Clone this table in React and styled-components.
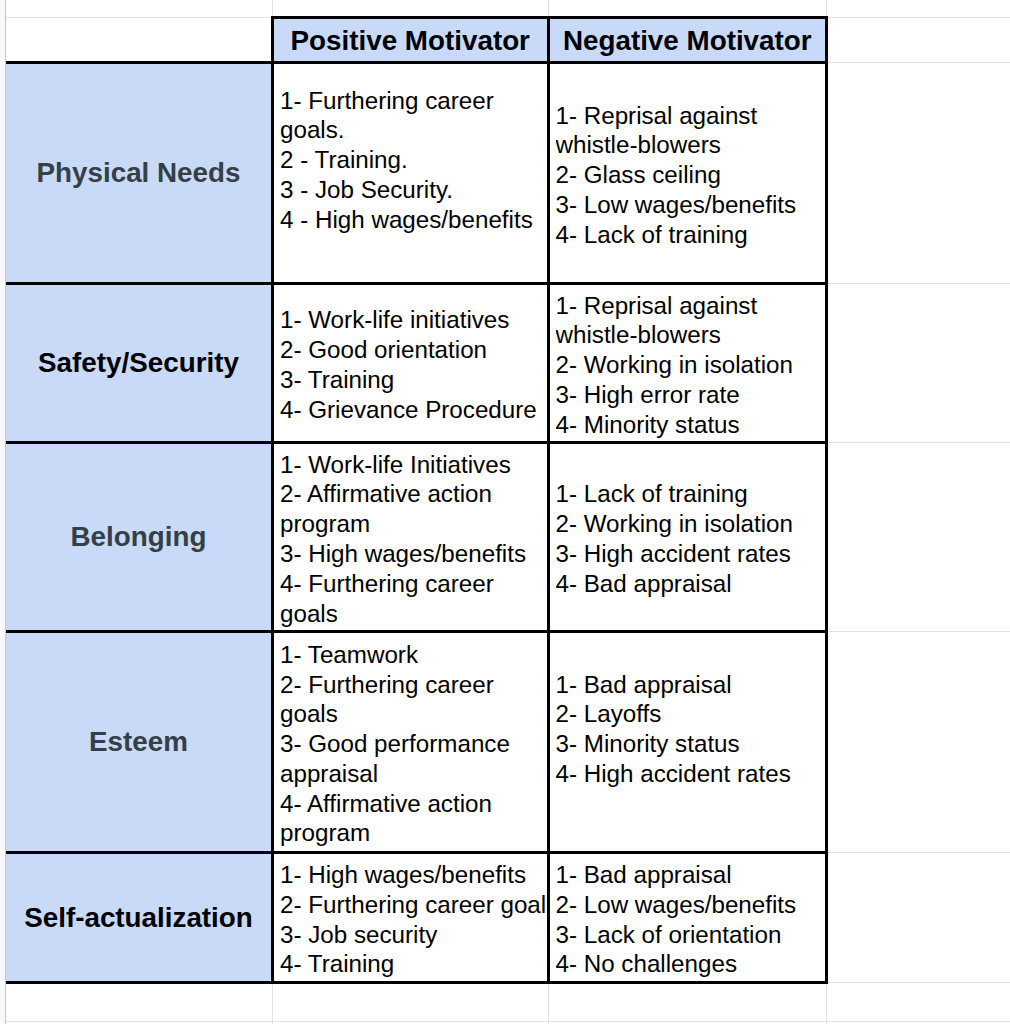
import React from 'react';
import styled, { createGlobalStyle } from 'styled-components';

const Global = createGlobalStyle`
  html, body { margin: 0; padding: 0; background: #ffffff; }
  body { font-family: "Liberation Sans", Arial, Helvetica, sans-serif; }
`;

const Page = styled.div`
  display: flex;
  width: 1010px;
  height: 1024px;
  overflow: hidden;
  background: #ffffff;
`;

const Gutter = styled.div`
  flex: none;
  width: 5px;
  background: #f8f9fa;
  border-right: 1px solid #c4c7c5;
`;

const Sheet = styled.table`
  flex: none;
  width: 1004px;
  border-collapse: collapse;
  table-layout: fixed;
  color: #000;
`;

const Row = styled.tr`
  height: ${(p) => p.$h}px;
`;

const Cell = styled.td`
  padding: 0;
  border: 1px solid #e2e2e2;
  &:first-child { border-left: none; }
  ${(p) => (p.$top ? 'border-top: none;' : '')}
`;

const HeadCell = styled.td`
  padding: 2px 0 0 0;
  border: 3px solid #000;
  background: #c9daf8;
  font-weight: 700;
  font-size: 27.8px;
  text-align: center;
  vertical-align: middle;
  white-space: nowrap;
`;

const Corner = styled.td`
  padding: 0;
  border: 1px solid #e2e2e2;
  border-left: none;
  border-bottom: 3px solid #000;
`;

const Label = styled.td`
  padding: 0;
  border: 3px solid #000;
  border-left: none;
  background: #c9daf8;
  font-weight: 700;
  font-size: 27.8px;
  text-align: center;
  vertical-align: middle;
  color: ${(p) => (p.$muted ? '#354046' : '#000')};
  white-space: nowrap;
`;

const Body = styled.td`
  padding: 4px 0 0 6px;
  border: 3px solid #000;
  background: #fff;
  vertical-align: middle;
  font-size: 24.2px;
  overflow: hidden;
`;

const Line = styled.div`
  line-height: 29.8px;
  height: 29.8px;
  white-space: nowrap;
  overflow: hidden;
`;

const Blank = styled.td`
  padding: 0;
  border: 1px solid #e2e2e2;
`;

const rows = [
  {
    label: 'Physical Needs',
    muted: true,
    h: 221,
    pos: ['1- Furthering career', 'goals.', '2 - Training.', '3 - Job Security.', '4 - High wages/benefits', ''],
    neg: ['1- Reprisal against', 'whistle-blowers', '2- Glass ceiling', '3- Low wages/benefits', '4- Lack of training'],
  },
  {
    label: 'Safety/Security',
    muted: false,
    h: 159,
    pos: ['1- Work-life initiatives', '2- Good orientation', '3- Training', '4- Grievance Procedure'],
    neg: ['1- Reprisal against', 'whistle-blowers', '2- Working in isolation', '3- High error rate', '4- Minority status'],
  },
  {
    label: 'Belonging',
    muted: true,
    h: 189,
    pos: ['1- Work-life Initiatives', '2- Affirmative action', 'program', '3- High wages/benefits', '4- Furthering career', 'goals'],
    neg: ['1- Lack of training', '2- Working in isolation', '3- High accident rates', '4- Bad appraisal'],
  },
  {
    label: 'Esteem',
    muted: true,
    h: 221,
    pos: ['1- Teamwork', '2- Furthering career', 'goals', '3- Good performance', 'appraisal', '4- Affirmative action', 'program'],
    neg: ['1- Bad appraisal', '2- Layoffs', '3- Minority status', '4- High accident rates', ''],
  },
  {
    label: 'Self-actualization',
    muted: false,
    h: 130,
    pos: ['1- High wages/benefits', '2- Furthering career goal', '3- Job security', '4- Training'],
    neg: ['1- Bad appraisal', '2- Low wages/benefits', '3- Lack of orientation', '4- No challenges'],
  },
];

const Lines = ({ items }) => (
  <>
    {items.map((t, i) => (
      <Line key={i}>{t || '\u00a0'}</Line>
    ))}
  </>
);

export default function App() {
  return (
    <Page>
      <Global />
      <Gutter />
      <Sheet>
        <colgroup>
          <col style={{ width: '266.5px' }} />
          <col style={{ width: '275.5px' }} />
          <col style={{ width: '278.5px' }} />
          <col style={{ width: '183.5px' }} />
        </colgroup>
        <tbody>
          <Row $h={17}>
            <Cell $top />
            <Cell $top />
            <Cell $top />
            <Cell $top />
          </Row>
          <Row $h={45.5}>
            <Corner />
            <HeadCell>Positive Motivator</HeadCell>
            <HeadCell>Negative Motivator</HeadCell>
            <Blank />
          </Row>
          {rows.map((r) => (
            <Row key={r.label} $h={r.h}>
              <Label $muted={r.muted}>{r.label}</Label>
              <Body>
                <Lines items={r.pos} />
              </Body>
              <Body>
                <Lines items={r.neg} />
              </Body>
              <Blank />
            </Row>
          ))}
          <Row $h={38.5}>
            <Cell />
            <Cell />
            <Cell />
            <Cell />
          </Row>
          <Row $h={40}>
            <Cell />
            <Cell />
            <Cell />
            <Cell />
          </Row>
        </tbody>
      </Sheet>
    </Page>
  );
}
